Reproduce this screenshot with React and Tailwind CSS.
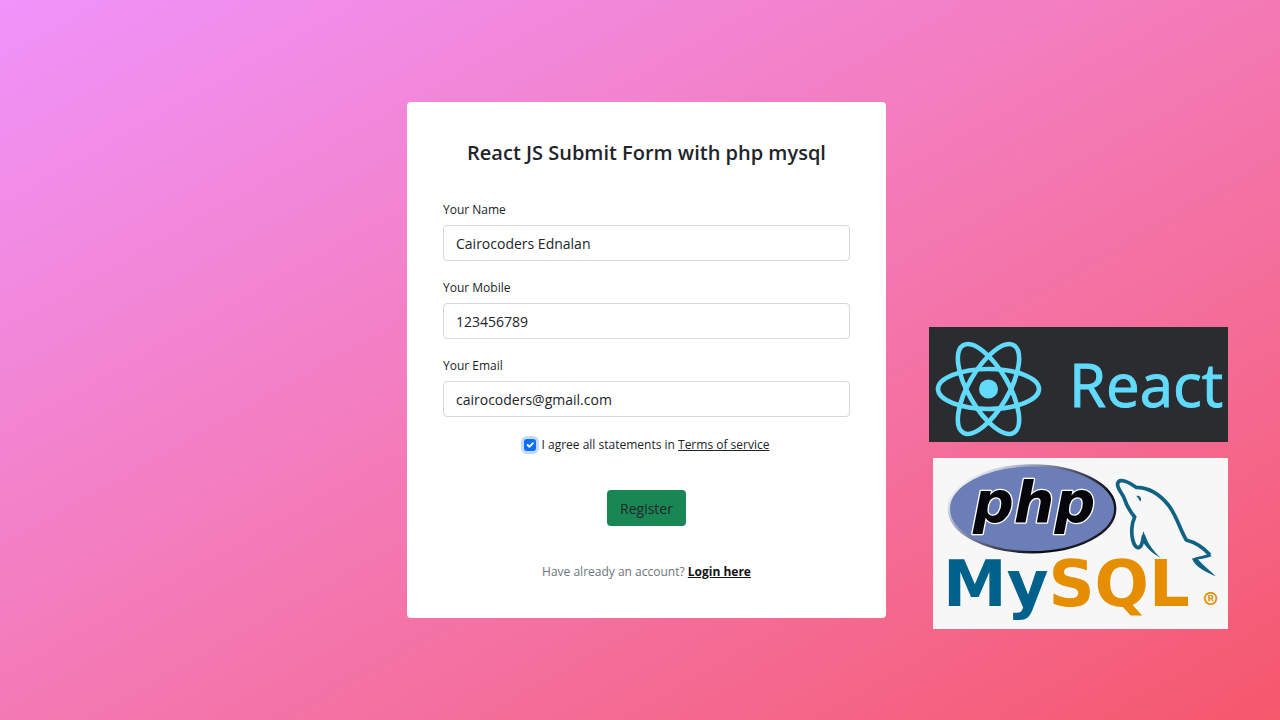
import { useState } from 'react';

const fields = [
  { id: 'name', label: 'Your Name', type: 'text', value: 'Cairocoders Ednalan' },
  { id: 'mobile', label: 'Your Mobile', type: 'text', value: '123456789' },
  { id: 'email', label: 'Your Email', type: 'email', value: 'cairocoders@gmail.com' },
];

function Field({ id, label, type, value }) {
  const [text, setText] = useState(value);
  return (
    <div className="flex flex-col gap-1.5">
      <label htmlFor={id} className="text-[12px] leading-[18px]">{label}</label>
      <input
        id={id}
        type={type}
        value={text}
        onChange={(e) => setText(e.target.value)}
        className="h-9 w-full rounded border border-[#d5d8dc] bg-white px-3 text-[14px] text-[#212529] outline-none"
      />
    </div>
  );
}

function ReactLogo() {
  return (
    <svg viewBox="0 0 299 115" className="w-[299px] bg-[#2b2c2f]" role="img" aria-label="React">
      <g fill="none" stroke="#61dafb" strokeWidth="4.6">
        <ellipse cx="59.5" cy="62" rx="50.5" ry="20" />
        <ellipse cx="59.5" cy="62" rx="50.5" ry="20" transform="rotate(60 59.5 62)" />
        <ellipse cx="59.5" cy="62" rx="50.5" ry="20" transform="rotate(120 59.5 62)" />
      </g>
      <circle cx="59.5" cy="62" r="9.5" fill="#61dafb" />
      <text x="140" y="80" fontSize="60" fill="#61dafb" stroke="#61dafb" strokeWidth="1" className="font-['Open_Sans',sans-serif]">React</text>
    </svg>
  );
}

function PhpMysqlLogo() {
  return (
    <svg viewBox="0 0 295 171" className="w-[295px] bg-[#f7f7f7]" role="img" aria-label="php MySQL">
      <defs>
        <linearGradient id="rim" x1="0" y1="0" x2="1" y2="0.6">
          <stop offset="0" stopColor="#5f6480" />
          <stop offset="0.14" stopColor="#f2f3f8" />
          <stop offset="0.34" stopColor="#a4a9c4" />
          <stop offset="0.6" stopColor="#4b4e63" />
          <stop offset="0.85" stopColor="#0c0c14" />
          <stop offset="1" stopColor="#1a1a24" />
        </linearGradient>
      </defs>
      <ellipse cx="99" cy="50.8" rx="83.2" ry="43.4" fill="#6c7eb7" stroke="url(#rim)" strokeWidth="2.4" />
      <text
        x="40" y="64" fontSize="57" fontWeight="700" fontStyle="italic"
        fill="#05050b" stroke="#ffffff" strokeWidth="2.6" strokeLinejoin="round" paintOrder="stroke"
        className="font-['DejaVu_Sans',sans-serif]"
      >
        php
      </text>
      <g transform="translate(167 2) scale(0.3333)" fill="#0f6284" stroke="none">
        <path
          fill="none" stroke="#0f6284" strokeWidth="11" strokeLinejoin="round"
          d="M131 226 C128 246 124 264 114 263 C101 260 93 232 96 202 C97 190 100 180 104 171 C90 154 79 134 74 118 C67 98 50 86 53 70 C58 54 82 64 108 82 C150 82 180 104 205 135 C232 170 240 210 259 240 C285 247 312 264 330 285"
        />
        <path d="M130 214 L137 230 C145 252 160 273 182 294 C157 280 137 263 124 238 Z" />
        <path d="M336 288 C322 293 306 297 294 298 C307 314 327 329 347 349 C323 338 286 322 276 296 C292 289 311 288 325 282 Z" />
        <path d="M109 108 C119 105 126 114 122 124 C118 124 118 116 109 108 Z" />
      </g>
      <text x="10" y="148" fontSize="64" fontWeight="700" fill="#00618a" className="font-['DejaVu_Sans',sans-serif]">
        My<tspan fill="#e48e00">SQL</tspan>
      </text>
      <text x="270" y="151" fontSize="23" fontWeight="500" fill="#e48e00" className="font-['Inter',sans-serif]">®</text>
    </svg>
  );
}

export default function App() {
  const [agreed, setAgreed] = useState(true);
  return (
    <main className="grid min-h-screen grid-cols-[1fr_479px_1fr] items-center bg-linear-to-br from-[#f093fb] to-[#f5576c] pl-[13px] font-['Open_Sans',sans-serif] text-[#212529]">
      <section className="col-start-2 rounded-sm bg-white p-9">
        <h1 className="mb-[33px] text-center text-[20px] leading-[30px] font-semibold">
          React JS Submit Form with php mysql
        </h1>
        <form onSubmit={(e) => e.preventDefault()}>
          <div className="flex flex-col gap-[18px]">
            {fields.map((field) => (
              <Field key={field.id} {...field} />
            ))}
            <div className="flex items-center justify-center gap-1.5 text-[12px] leading-5">
              <span className="grid place-items-center">
                <input
                  id="agree"
                  type="checkbox"
                  checked={agreed}
                  onChange={(e) => setAgreed(e.target.checked)}
                  className="col-start-1 row-start-1 size-3 appearance-none rounded-[3px] bg-white ring-3 ring-[#0d6efd]/25 checked:bg-[#0d6efd]"
                />
                <svg viewBox="0 0 20 20" className="pointer-events-none col-start-1 row-start-1 size-3" fill="none" stroke="#fff" strokeWidth="3" strokeLinecap="round" strokeLinejoin="round">
                  <path d="M6 10l3 3 6-6" />
                </svg>
              </span>
              <p>
                <label htmlFor="agree">I agree all statements in </label>
                <a href="#terms" className="underline">Terms of service</a>
              </p>
            </div>
          </div>
          <div className="mt-[35px] mb-9 flex justify-center">
            <button type="submit" className="h-9 rounded bg-[#198754] px-[13px] text-[14px] text-[#212529]">
              Register
            </button>
          </div>
        </form>
        <p className="text-center text-[12px] leading-5 text-[#6c757d]">
          Have already an account?{' '}
          <a href="#login" className="font-bold text-[#111417] underline">Login here</a>
        </p>
      </section>
      <aside className="flex flex-col items-end gap-4 pt-[236px] pr-[52px]">
        <ReactLogo />
        <PhpMysqlLogo />
      </aside>
    </main>
  );
}
